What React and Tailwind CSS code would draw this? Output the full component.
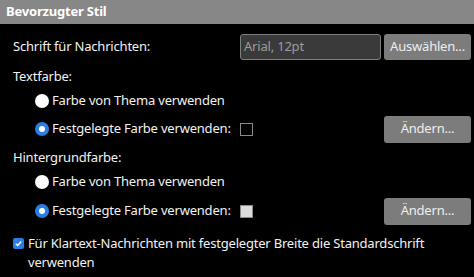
import React from 'react'

// Radio-Button im Windows-Stil
function Radio({ checked }) {
  if (checked) {
    return (
      <span className="w-[14px] h-[14px] rounded-full bg-[#2a7de1] flex items-center justify-center shrink-0">
        <span className="w-[6px] h-[6px] rounded-full bg-white" />
      </span>
    )
  }
  return <span className="w-[14px] h-[14px] rounded-full bg-white shrink-0" />
}

function ColorRow({ label, checked, swatch, button }) {
  return (
    <div className="grid grid-cols-[227px_144px_87px] items-center">
      <div className="flex items-center gap-[3px] pl-[22px]">
        <Radio checked={checked} />
        <span>{label}</span>
      </div>
      <div>
        {swatch !== undefined && (
          <span className={`block w-[13px] h-[13px] border border-[#8a8a8a] ${swatch}`} />
        )}
      </div>
      {button && (
        <button className="h-[27px] rounded-[3px] bg-[#7c7c7c] text-[#eeeeee]">{button}</button>
      )}
    </div>
  )
}

export default function App() {
  return (
    <div
      className="w-[474px] h-[277px] bg-black text-[#f2f2f2] text-[13px] tracking-[-0.2px] overflow-hidden"
      style={{ fontFamily: '"Noto Sans", "Open Sans", sans-serif' }}
    >
      <div className="h-[24px] bg-[#878787] px-[6px] flex items-center font-bold text-white">
        Bevorzugter Stil
      </div>

      <div className="pl-[13px]">
        <div className="mt-[10px] h-[26px] grid grid-cols-[227px_144px_87px] items-center">
          <span>Schrift für Nachrichten:</span>
          <div className="h-[26px] w-[141px] rounded-[3px] border border-[#7f7f7f] bg-[#3a3a3a] text-[#9c9c9c] flex items-center px-[3px]">
            Arial, 12pt
          </div>
          <button className="h-[26px] rounded-[3px] bg-[#7c7c7c] text-[#eeeeee]">Auswählen...</button>
        </div>

        <div className="mt-[5px] h-[24px] flex items-center">Textfarbe:</div>
        <div className="h-[24px] flex items-center">
          <ColorRow label="Farbe von Thema verwenden" />
        </div>
        <div className="mt-[2px] h-[28px] flex items-center">
          <ColorRow label="Festgelegte Farbe verwenden:" checked swatch="bg-black" button="Ändern..." />
        </div>

        <div className="mt-[3px] h-[24px] flex items-center">Hintergrundfarbe:</div>
        <div className="h-[24px] flex items-center">
          <ColorRow label="Farbe von Thema verwenden" />
        </div>
        <div className="mt-[3px] h-[28px] flex items-center">
          <ColorRow label="Festgelegte Farbe verwenden:" checked swatch="bg-[#dcdcdc]" button="Ändern..." />
        </div>

        <div className="mt-[9px] flex items-start gap-[4px] leading-[19px]">
          <span className="mt-[4px] w-[11px] h-[11px] rounded-[2px] bg-[#2a7de1] flex items-center justify-center shrink-0">
            <svg viewBox="0 0 10 10" className="w-[9px] h-[9px]">
              <path d="M2 5.2 L4.2 7.2 L8 2.8" fill="none" stroke="white" strokeWidth="1.6" />
            </svg>
          </span>
          <span className="w-[430px]">
            Für Klartext-Nachrichten mit festgelegter Breite die Standardschrift verwenden
          </span>
        </div>
      </div>
    </div>
  )
}
